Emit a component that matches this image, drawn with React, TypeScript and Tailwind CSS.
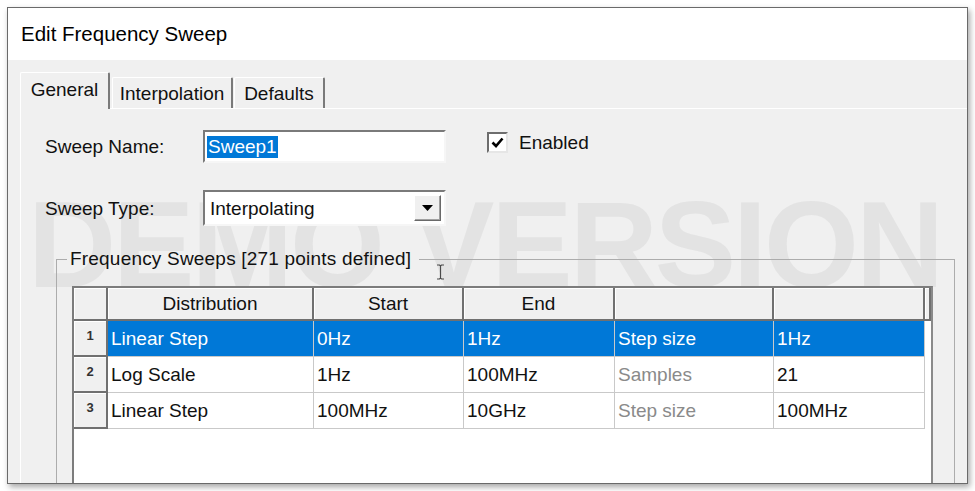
import React from "react";

const rows = [
  { n: 1, dist: "Linear Step", start: "0Hz", end: "1Hz", p: "Step size", v: "1Hz", sel: true },
  { n: 2, dist: "Log Scale", start: "1Hz", end: "100MHz", p: "Samples", v: "21", sel: false },
  { n: 3, dist: "Linear Step", start: "100MHz", end: "10GHz", p: "Step size", v: "100MHz", sel: false },
];

function HeaderCell({ w, children }: { w: string; children?: React.ReactNode }) {
  return (
    <div
      className={`${w} h-full shrink-0 bg-[#f0f0f0] border-r-2 border-b-2 border-[#707070] shadow-[inset_1px_1px_0_#ffffff] flex items-center justify-center text-[#111]`}
    >
      {children}
    </div>
  );
}

function DataCell({ w, sel, muted, children }: { w: string; sel: boolean; muted?: boolean; children: React.ReactNode }) {
  const color = sel ? "text-white" : muted ? "text-[#8a8a8a]" : "text-[#111]";
  return (
    <div className={`${w} h-full shrink-0 border-r border-b border-[#c9c9c9] flex items-center pl-[3px] ${color}`}>
      {children}
    </div>
  );
}

export default function App() {
  return (
    <div className="w-[975px] h-[491px] bg-white overflow-hidden font-['Liberation_Sans',Arial,sans-serif] text-[19px] leading-none text-[#111]">
      <div className="ml-[7px] mt-[7px] w-[961px] h-[477px] border border-[#6a6a6a] bg-[#f0f0f0] shadow-[2px_3px_6px_rgba(0,0,0,0.35)] flex flex-col overflow-hidden">
        {/* title */}
        <div className="h-[52px] shrink-0 bg-white flex items-center pl-[13px] text-[20.5px] text-black">
          Edit Frequency Sweep
        </div>

        {/* body */}
        <div className="relative isolate flex flex-col">
          <div className="absolute left-[20px] top-[124px] -z-10 text-[122px] font-bold tracking-[-3px] text-[#e3e3e3] leading-none whitespace-nowrap select-none">
            DEMO VERSION
          </div>

          {/* I-beam cursor */}
          <svg className="absolute left-[428px] top-[204px] z-20" width="9" height="16" viewBox="0 0 9 16">
            <path d="M1 1h2.5l1 1 1-1H8M4.5 2v12M1 15h2.5l1-1 1 1H8" fill="none" stroke="#4a4a4a" strokeWidth="1.2" />
          </svg>

          {/* tabs */}
          <div className="flex items-end h-[48px] pl-[12px] shrink-0">
            <div className="relative z-10 -mb-px h-[37px] w-[90px] bg-[#f0f0f0] border-l border-t border-white rounded-t-[2px] border-r-2 border-r-[#7a7a7a] flex justify-center pt-[7px]">
              General
            </div>
            <div className="ml-[2px] h-[31px] w-[121px] border-l border-t border-white rounded-t-[2px] border-r-2 border-r-[#7a7a7a] flex justify-center pt-[6px]">
              Interpolation
            </div>
            <div className="ml-px h-[31px] w-[91px] border-l border-t border-white rounded-t-[2px] border-r-2 border-r-[#7a7a7a] flex justify-center pt-[6px]">
              Defaults
            </div>
          </div>

          {/* tab page */}
          <div className="ml-[12px] border-l border-t border-white flex flex-col">
            {/* sweep name row */}
            <div className="flex items-center mt-[21px]">
              <div className="ml-[24px] w-[158px]">Sweep Name:</div>
              <div className="w-[243px] h-[33px] border-2 border-t-[#7a7a7a] border-l-[#7a7a7a] border-r-[#f6f6f6] border-b-[#f6f6f6] bg-white flex items-center pl-[2px]">
                <span className="bg-[#0078d7] text-white h-[22px] flex items-center px-px">Sweep1</span>
              </div>
              <div className="ml-[41px] mb-[8px] flex items-center">
                <div className="w-[21px] h-[21px] border-2 border-t-[#6d6d6d] border-l-[#6d6d6d] border-r-[#e6e6e6] border-b-[#e6e6e6] bg-white flex items-center justify-center">
                  <svg width="13" height="11" viewBox="0 0 13 11">
                    <path d="M1.5 5.5l3.5 3.5 6.5-7.5" fill="none" stroke="#000" strokeWidth="2.6" />
                  </svg>
                </div>
                <span className="ml-[11px]">Enabled</span>
              </div>
            </div>

            {/* sweep type row */}
            <div className="flex items-center mt-[27px]">
              <div className="ml-[24px] w-[158px]">Sweep Type:</div>
              <div className="w-[243px] h-[36px] border-2 border-t-[#7a7a7a] border-l-[#7a7a7a] border-r-[#f6f6f6] border-b-[#f6f6f6] bg-white flex items-center">
                <span className="flex-1 pl-[5px]">Interpolating</span>
                <div className="mr-[3px] w-[27px] h-[26px] bg-[#f0f0f0] border border-t-white border-l-white border-r-[#696969] border-b-[#696969] shadow-[inset_-1px_-1px_0_#a0a0a0] flex items-center justify-center">
                  <svg width="11" height="6" viewBox="0 0 11 6">
                    <path d="M0 0h11L5.5 6z" fill="#000" />
                  </svg>
                </div>
              </div>
            </div>

            {/* group box */}
            <fieldset className="ml-[35px] mr-[12px] mt-[22px] h-[260px] border border-[#acacac] shrink-0">
              <legend className="ml-[10px] pl-[3px] pr-[8px] leading-[22px] tracking-[0.2px]">
                Frequency Sweeps [271 points defined]
              </legend>
              <div className="ml-[15px] mt-[16px] w-[861px] h-[240px] border-2 border-t-[#7c7c7c] border-l-[#7c7c7c] border-r-[#8a8a8a] border-b-[#8a8a8a] bg-white flex flex-col">
                <div className="flex h-[33px] shrink-0">
                  <HeaderCell w="w-[34px]" />
                  <HeaderCell w="w-[206px]">Distribution</HeaderCell>
                  <HeaderCell w="w-[150px]">Start</HeaderCell>
                  <HeaderCell w="w-[151px]">End</HeaderCell>
                  <HeaderCell w="w-[159px]" />
                  <HeaderCell w="w-[151px]" />
                  <HeaderCell w="w-[6px]" />
                </div>
                {rows.map((r) => (
                  <div key={r.n} className="flex h-[36px] shrink-0">
                    <div className="w-[34px] h-full shrink-0 bg-[#f0f0f0] border-r-2 border-b-2 border-[#707070] shadow-[inset_1px_1px_0_#ffffff] flex justify-center pt-[8px] text-[13px] font-bold text-[#333]">
                      {r.n}
                    </div>
                    <div className={`flex h-full ${r.sel ? "bg-[#0078d7]" : "bg-white"}`}>
                      <DataCell w="w-[206px]" sel={r.sel}>{r.dist}</DataCell>
                      <DataCell w="w-[150px]" sel={r.sel}>{r.start}</DataCell>
                      <DataCell w="w-[151px]" sel={r.sel}>{r.end}</DataCell>
                      <DataCell w="w-[159px]" sel={r.sel} muted>{r.p}</DataCell>
                      <DataCell w="w-[151px]" sel={r.sel}>{r.v}</DataCell>
                    </div>
                  </div>
                ))}
              </div>
            </fieldset>
          </div>
        </div>
      </div>
    </div>
  );
}
